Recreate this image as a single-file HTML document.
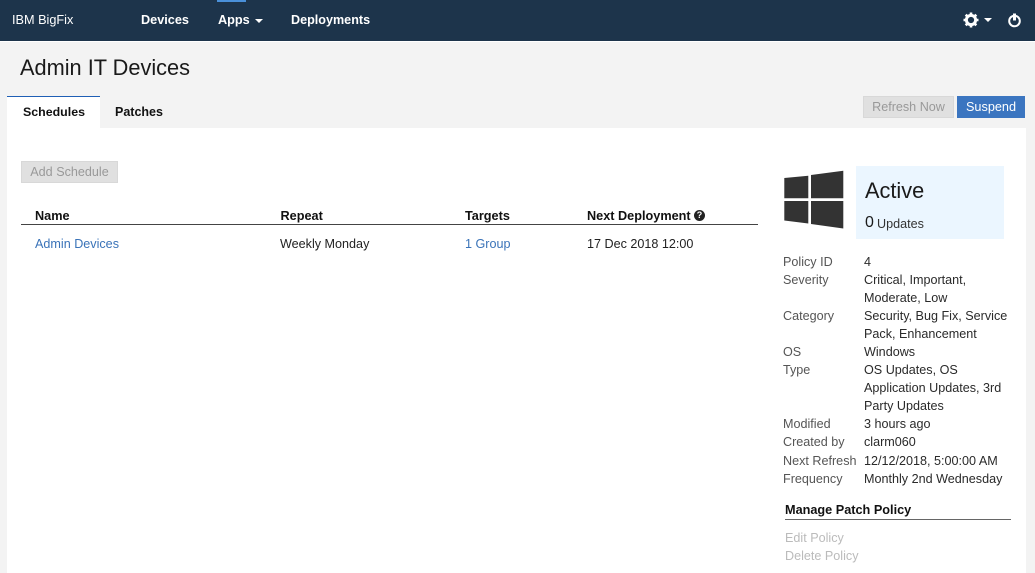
<!DOCTYPE html>
<html><head><meta charset="utf-8">
<style>
html,body{margin:0;padding:0}
body{width:1035px;height:573px;overflow:hidden;position:relative;background:#f3f3f3;font-family:"Liberation Sans",sans-serif;font-size:12.6px;color:#222}
.a{position:absolute;white-space:nowrap}
.b{font-weight:bold;font-size:12.7px}
.l{color:#3a73b8}
.k{color:#555;left:783px}
.v{color:#2a2a2a;left:864px}
</style></head><body>
<div class="a" style="left:0;top:0;width:1035px;height:41px;background:#1d344b"></div>
<div class="a" style="left:0;top:41px;width:1035px;height:1px;background:#fff"></div>
<div class="a" style="left:217px;top:0;width:29px;height:2px;background:#4a90d9"></div>
<div class="a" style="left:12px;top:13px;color:#fff;font-size:12.7px">IBM BigFix</div>
<div class="a b" style="left:141px;top:13px;color:#fff;font-size:12.7px">Devices</div>
<div class="a b" style="left:218px;top:13px;color:#fff;font-size:12.7px">Apps</div>
<div class="a" style="left:255px;top:19px;width:0;height:0;border:4px solid transparent;border-top-color:#fff;border-bottom:0"></div>
<div class="a b" style="left:291px;top:13px;color:#fff;font-size:12.6px">Deployments</div>
<svg class="a" style="left:963px;top:12px" width="16" height="16" viewBox="0 0 16 16"><circle cx="8" cy="8" r="4.600" fill="none" stroke="#fff" stroke-width="3"/><g stroke="#fff" stroke-width="2.600"><path d="M8 .5V3.500M8 12.500V15.500M.5 8H3.500M12.500 8H15.500M2.700 2.700L4.800 4.800M11.200 11.200L13.300 13.300M13.300 2.700L11.200 4.800M4.800 11.200L2.700 13.300"/></g></svg>
<div class="a" style="left:984px;top:18px;width:0;height:0;border:4px solid transparent;border-top-color:#fff;border-bottom:0"></div>
<svg class="a" style="left:1007px;top:12px" width="15" height="16" viewBox="0 0 15 16"><circle cx="7.500" cy="9" r="5.300" fill="none" stroke="#fff" stroke-width="2"/><path d="M7.500 1.500V8.500" stroke="#fff" stroke-width="3"/></svg>
<div class="a" style="left:20px;top:55px;font-size:21.75px;color:#1a1a1a">Admin IT Devices</div>
<div class="a" style="left:7px;top:128px;width:1019px;height:445px;background:#fff"></div>
<div class="a" style="left:7px;top:96px;width:93px;height:32px;background:#fff;border-top:1px solid #1f5fb5;box-sizing:border-box"></div>
<div class="a b" style="left:23px;top:105px;color:#111;font-size:12.4px">Schedules</div>
<div class="a b" style="left:115px;top:105px;color:#111;font-size:12.5px">Patches</div>
<div class="a" style="left:863px;top:96px;width:91px;height:22px;background:#e0e0e0;border:1px solid #d8d8d8;box-sizing:border-box;color:#999;font-size:12.6px;text-align:center;line-height:20px">Refresh Now</div>
<div class="a" style="left:957px;top:96px;width:68px;height:22px;background:#3b75c0;box-sizing:border-box;color:#fff;font-size:12.7px;text-align:center;line-height:23px">Suspend</div>
<div class="a" style="left:21px;top:161px;width:97px;height:22px;background:#e0e0e0;border:1px solid #d8d8d8;box-sizing:border-box;color:#999;font-size:12.6px;text-align:center;line-height:20px">Add Schedule</div>
<div class="a b" style="left:35px;top:209px;color:#111">Name</div>
<div class="a b" style="left:280.500px;top:209px;color:#111">Repeat</div>
<div class="a b" style="left:465px;top:209px;color:#111">Targets</div>
<div class="a b" style="left:587px;top:209px;color:#111">Next Deployment</div>
<div class="a" style="left:694px;top:210px;width:11px;height:11px;border-radius:50%;background:#222;color:#fff;font-size:9px;font-weight:bold;line-height:11px;text-align:center">?</div>
<div class="a" style="left:21px;top:224px;width:737px;height:1px;background:#444"></div>
<div class="a l" style="left:35px;top:237px">Admin Devices</div>
<div class="a" style="left:280px;top:237px">Weekly Monday</div>
<div class="a l" style="left:465px;top:237px">1 Group</div>
<div class="a" style="left:587px;top:237px">17 Dec 2018 12:00</div>
<svg class="a" style="left:784px;top:170px" width="60" height="60" viewBox="0 0 60 60"><path fill="#333" d="M.3 8L24.300 5.700V28.300H.3ZM27 5L59.300.7V28.300H27ZM.3 31H24.300V53.500L.3 50.500ZM27 31H59.300V58.500L27 54Z"/></svg>
<div class="a" style="left:856px;top:166px;width:148px;height:73px;background:#ebf6ff"></div>
<div class="a" style="left:865px;top:178px;font-size:21.75px;color:#1a1a1a">Active</div>
<div class="a" style="left:865px;top:214px;font-size:16px;color:#1a1a1a">0</div>
<div class="a" style="left:877px;top:217px;color:#333">Updates</div>
<div class="a k" style="top:255px">Policy ID</div><div class="a v" style="top:255px">4</div>
<div class="a k" style="top:273px">Severity</div><div class="a v" style="top:273px">Critical, Important,</div>
<div class="a v" style="top:291px">Moderate, Low</div>
<div class="a k" style="top:309px">Category</div><div class="a v" style="top:309px">Security, Bug Fix, Service</div>
<div class="a v" style="top:327px">Pack, Enhancement</div>
<div class="a k" style="top:345px">OS</div><div class="a v" style="top:345px">Windows</div>
<div class="a k" style="top:363px">Type</div><div class="a v" style="top:363px">OS Updates, OS</div>
<div class="a v" style="top:381px">Application Updates, 3rd</div>
<div class="a v" style="top:399px">Party Updates</div>
<div class="a k" style="top:417px">Modified</div><div class="a v" style="top:417px">3 hours ago</div>
<div class="a k" style="top:435px">Created by</div><div class="a v" style="top:435px">clarm060</div>
<div class="a k" style="top:454px">Next Refresh</div><div class="a v" style="top:454px">12/12/2018, 5:00:00 AM</div>
<div class="a k" style="top:472px">Frequency</div><div class="a v" style="top:472px">Monthly 2nd Wednesday</div>
<div class="a b" style="left:785px;top:503px;color:#111">Manage Patch Policy</div>
<div class="a" style="left:785px;top:519px;width:226px;height:1px;background:#666"></div>
<div class="a" style="left:785px;top:531px;color:#bbb">Edit Policy</div>
<div class="a" style="left:785px;top:549px;color:#bbb">Delete Policy</div>
</body></html>
